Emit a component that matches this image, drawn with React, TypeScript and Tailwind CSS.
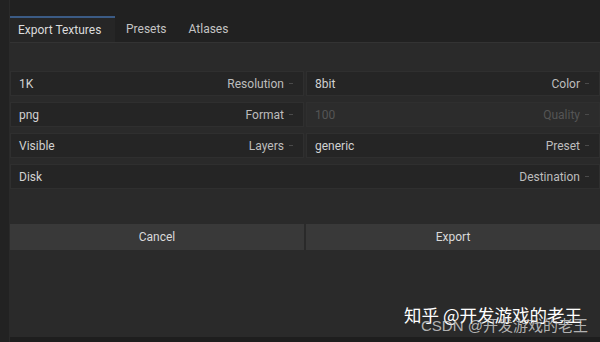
const font = { fontFamily: 'Roboto, "Noto Sans", sans-serif' }

function Field({ value, label, disabled }: { value?: string; label: string; disabled?: boolean }) {
  return (
    <div
      className={`h-[25px] flex items-center justify-between pl-[8px] pr-[10px] border border-[#2f2f2f] ${
        disabled ? 'bg-[#2c2c2c] text-[#555]' : 'bg-[#252525] text-[#d2d2d2]'
      }`}
    >
      <span>{value}</span>
      <span className="flex items-center gap-[5px]">
        <span className={disabled ? 'text-[#555]' : 'text-[#bdbdbd]'}>{label}</span>
        <span className="w-[4px] h-[1px] bg-[#4a4a4a]" />
      </span>
    </div>
  )
}

export default function App() {
  return (
    <div className="relative w-[600px] h-[342px] flex bg-[#212121] text-[12px] overflow-hidden" style={font}>
      <div className="w-[10px] bg-[#222222] border-r border-[#2a2a2a]" />
      <div className="flex-1 flex flex-col">
        <div className="h-[43px] pt-[16px] flex items-stretch border-b border-[#333333]">
          <div className="w-[105px] pl-[8px] flex items-center bg-[#262626] border-t-2 border-[#3b5b85] text-[#dcdcdc]">
            Export Textures
          </div>
          <div className="px-[11px] flex items-center text-[#c4c4c4]">Presets</div>
          <div className="px-[11px] flex items-center text-[#c4c4c4]">Atlases</div>
        </div>
        <div className="flex-1 bg-[#2a2a2a] pt-[28px] flex flex-col">
          <div className="grid grid-cols-2 gap-x-[2px] gap-y-[6px]">
            <Field value="1K" label="Resolution" />
            <Field value="8bit" label="Color" />
            <Field value="png" label="Format" />
            <Field value="100" label="Quality" disabled />
            <Field value="Visible" label="Layers" />
            <Field value="generic" label="Preset" />
            <div className="col-span-2">
              <Field value="Disk" label="Destination" />
            </div>
          </div>
          <div className="mt-[35px] grid grid-cols-2 gap-x-[2px]">
            <button className="h-[26px] bg-[#393939] text-[#dadada]">Cancel</button>
            <button className="h-[26px] bg-[#393939] text-[#dadada]">Export</button>
          </div>
        </div>
        <div className="h-[5px] bg-[#1e1e1e]" />
      </div>
      <div
        className="absolute left-[404px] top-[304px] text-[17.5px] leading-[22px] text-white"
        style={{ fontFamily: '"Noto Sans CJK SC", sans-serif' }}
      >
        知乎 @开发游戏的老王
      </div>
      <div
        className="absolute left-[421px] top-[317px] text-[15px] leading-[18px] text-[#d8d8d8]/80"
        style={{ fontFamily: '"Liberation Sans", "Noto Sans CJK SC", sans-serif' }}
      >
        CSDN @开发游戏的老王
      </div>
    </div>
  )
}
